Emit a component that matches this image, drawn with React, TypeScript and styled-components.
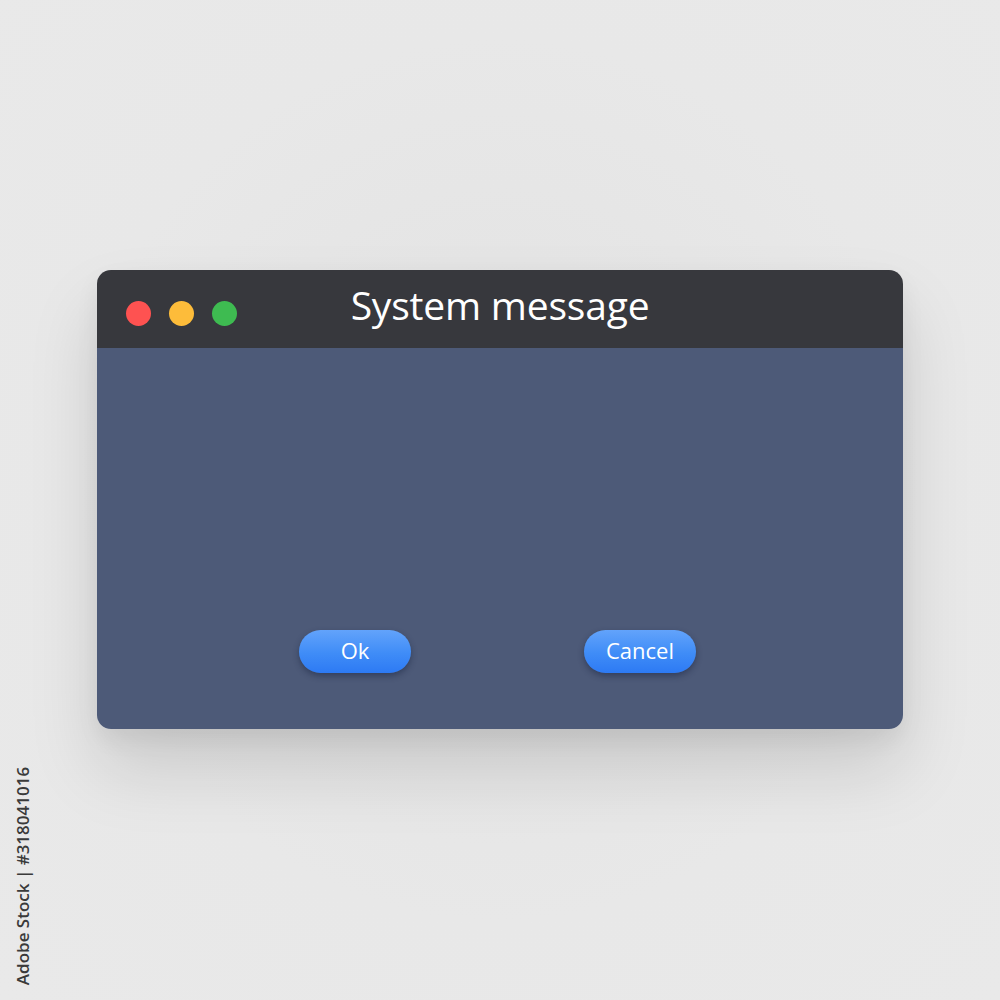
import React from "react";
import styled, { createGlobalStyle } from "styled-components";

const Global = createGlobalStyle`
  html, body { margin: 0; padding: 0; }
  body { background: #e7e7e7; font-family: "Open Sans", "Liberation Sans", sans-serif; }
`;

const Page = styled.div`
  position: relative;
  width: 1000px;
  height: 1000px;
  box-sizing: border-box;
  padding: 270px 97px 0 97px;
  background: radial-gradient(ellipse at 50% 48%, #e2e2e2 0%, #e8e8e8 60%, #e9e9e9 100%);
  overflow: hidden;
`;

const Window = styled.div`
  width: 806px;
  height: 459px;
  border-radius: 14px;
  overflow: hidden;
  display: flex;
  flex-direction: column;
  box-shadow: 0 40px 70px rgba(0, 0, 0, 0.13), 0 10px 25px rgba(0, 0, 0, 0.06);
`;

const TitleBar = styled.div`
  position: relative;
  height: 78px;
  flex: none;
  background: #37383d;
  display: flex;
  align-items: center;
  justify-content: center;
`;

const Dots = styled.div`
  position: absolute;
  left: 29px;
  top: 31px;
  display: flex;
  gap: 18px;
`;

const Dot = styled.span<{ $c: string }>`
  width: 25px;
  height: 25px;
  border-radius: 50%;
  background: ${(p) => p.$c};
`;

const Title = styled.div`
  color: #ffffff;
  font-family: "Open Sans", "Liberation Sans", sans-serif;
  font-size: 39px;
  letter-spacing: -0.2px;
  margin-top: -10px;
`;

const Body = styled.div`
  flex: 1;
  background: #4d5a78;
  display: flex;
  align-items: flex-end;
  justify-content: center;
  gap: 173px;
  padding-bottom: 56px;
  padding-right: 5px;
`;

const Button = styled.button`
  width: 112px;
  height: 43px;
  border: none;
  border-radius: 22px;
  background: linear-gradient(180deg, #62a3fb 0%, #3f8cf7 55%, #2d7af4 100%);
  box-shadow: 0 3px 6px rgba(20, 30, 60, 0.45);
  color: #ffffff;
  font-family: "Open Sans", "Liberation Sans", sans-serif;
  font-size: 22px;
  padding: 0 0 3px;
  cursor: pointer;
`;

const SideMark = styled.div`
  position: absolute;
  left: 22px;
  top: 876px;
  transform: translate(-50%, -50%) rotate(-90deg);
  white-space: nowrap;
  font-family: "Open Sans", "Liberation Sans", sans-serif;
  font-size: 17px;
  font-weight: 600;
  color: #3a3a3a;
`;

export default function App() {
  return (
    <>
      <Global />
      <Page>
        <Window>
          <TitleBar>
            <Dots>
              <Dot $c="#fe5251" />
              <Dot $c="#fdbc3a" />
              <Dot $c="#3ebb51" />
            </Dots>
            <Title>System message</Title>
          </TitleBar>
          <Body>
            <Button>Ok</Button>
            <Button>Cancel</Button>
          </Body>
        </Window>
        <SideMark>Adobe Stock | #318041016</SideMark>
      </Page>
    </>
  );
}
